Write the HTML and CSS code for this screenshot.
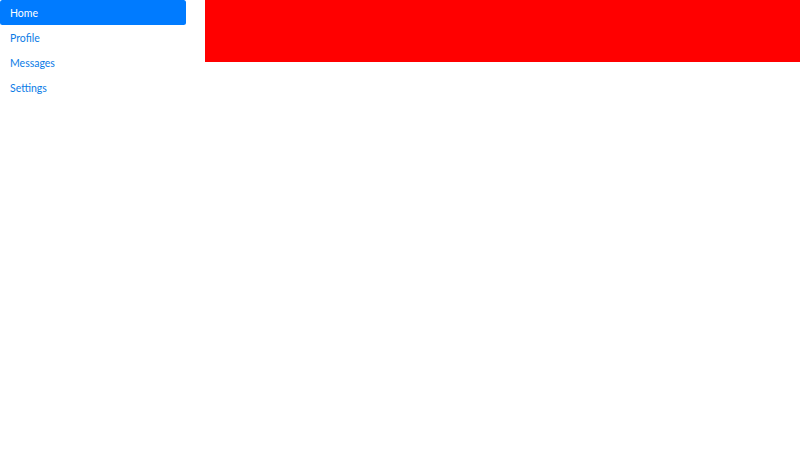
FILE: index.html
```html
<!DOCTYPE html>
<html>
<head>
<meta charset="utf-8">
<link rel="stylesheet" href="styles.css">
</head>
<body>
<div class="layout">
  <nav class="pills">
    <a class="pill active" href="#">Home</a>
    <a class="pill" href="#">Profile</a>
    <a class="pill" href="#">Messages</a>
    <a class="pill" href="#">Settings</a>
  </nav>
  <div class="content"><div class="box"></div></div>
</div>
</body>
</html>
```
FILE: styles.css
```css
html, body { margin: 0; padding: 0; background: #fff; }
body { font-family: "Lato", "Open Sans", sans-serif; font-size: 10.5px; line-height: 15px; }
.layout { display: flex; gap: 19px; }
.pills { width: 186px; display: flex; flex-direction: column; }
.pill { display: block; padding: 6px 10px 4px; color: #0a7be6; text-decoration: none; border-radius: 2.5px; }
.pill.active { background: #007bff; color: #fff; }
.content { flex: 1; }
.box { height: 62px; background: #ff0000; }
```
